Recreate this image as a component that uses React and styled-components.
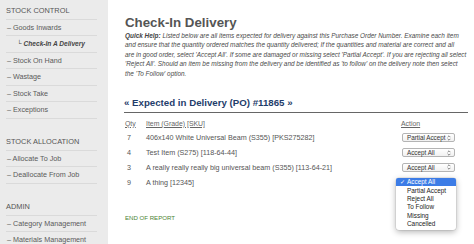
import React from "react";
import styled, { createGlobalStyle } from "styled-components";

const GlobalStyle = createGlobalStyle`
  html, body {
    margin: 0;
    padding: 0;
    background: #fff;
  }
  body {
    width: 474px;
    height: 244px;
    overflow: hidden;
    font-family: "Liberation Sans", Arial, sans-serif;
  }
`;

const nav = [
  {
    title: "STOCK CONTROL",
    items: [
      { label: "Goods Inwards" },
      { label: "Check-In A Delivery", sub: true },
      { label: "Stock On Hand" },
      { label: "Wastage" },
      { label: "Stock Take" },
      { label: "Exceptions" },
    ],
  },
  {
    title: "STOCK ALLOCATION",
    items: [{ label: "Allocate To Job" }, { label: "Deallocate From Job" }],
  },
  {
    title: "ADMIN",
    items: [{ label: "Category Management" }, { label: "Materials Management" }],
  },
];

const rows = [
  { qty: 7, item: "406x140 White Universal Beam (S355) [PKS275282]", action: "Partial Accept" },
  { qty: 4, item: "Test Item (S275) [118-64-44]", action: "Accept All" },
  { qty: 3, item: "A really really really big universal beam (S355) [113-64-21]", action: "Accept All" },
  { qty: 9, item: "A thing [12345]", action: "Accept All", open: true },
];

const options = ["Accept All", "Partial Accept", "Reject All", "To Follow", "Missing", "Cancelled"];

const Page = styled.div`
  display: flex;
  height: 244px;
`;

const Sidebar = styled.nav`
  width: 108px;
  flex-shrink: 0;
  background: #ebebeb;
  padding-top: 3px;
  box-sizing: border-box;
`;

const Group = styled.div`
  & + & {
    margin-top: 15.5px;
  }
`;

const NavRow = styled.div`
  height: 16.5px;
  box-sizing: border-box;
  margin: 0 11px 0 6px;
  border-bottom: 1px solid #dadada;
  display: flex;
  align-items: center;
  font-size: ${(p) => (p.$sub ? "6.6px" : "7.2px")};
  color: ${(p) => (p.$sub ? "#444" : "#5a5a5a")};
  font-style: ${(p) => (p.$sub ? "italic" : "normal")};
  font-weight: ${(p) => (p.$sub ? "bold" : "normal")};
  padding-left: ${(p) => (p.$sub ? "11px" : "1px")};
  white-space: nowrap;
`;

const NavHeading = styled(NavRow)`
  font-size: 7.4px;
  color: #555;
  padding-left: 0;
`;

const Main = styled.main`
  flex: 1;
  min-width: 0;
  padding: 16.7px 6px 0 17px;
  color: #555;
`;

const Title = styled.h1`
  margin: 0;
  font-size: 13.3px;
  line-height: 12px;
  font-weight: bold;
  color: #555;
`;

const Help = styled.p`
  margin: 2px 0 0;
  font-size: 6.42px;
  line-height: 9.5px;
  font-style: italic;
  color: #4a4a4a;
  white-space: nowrap;

  b {
    color: #444;
  }
`;

const SectionHeader = styled.h2`
  margin: 19px 0 0 -1px;
  padding-bottom: 4px;
  border-bottom: 1px solid #666;
  font-size: 9.7px;
  line-height: 11px;
  font-weight: bold;
  color: #1f3d6b;
`;

const Table = styled.div`
  margin-top: 2.5px;
  display: grid;
  grid-template-columns: 21px 255px 1fr;
  grid-auto-rows: 14.8px;
  align-items: center;
  font-size: 7.2px;
  color: #555;
`;

const HeadCell = styled.span`
  text-decoration: underline;
  color: #666;
  font-size: 6.9px;
`;

const Cell = styled.span`
  position: relative;
  white-space: nowrap;
  padding-left: ${(p) => p.$pad || 0};
`;

const Select = styled.div`
  width: 53px;
  height: 9px;
  box-sizing: border-box;
  margin-left: 1px;
  border: 1px solid #b4b4b4;
  border-radius: 2px;
  background: linear-gradient(#fff, #f1f1f1);
  display: flex;
  align-items: center;
  justify-content: space-between;
  padding: 0 3px 0 4px;
  font-size: 6.3px;
  color: #333;
`;

const Menu = styled.div`
  position: absolute;
  left: -5px;
  top: 0px;
  width: 60px;
  padding: 0 0 2px;
  background: #fff;
  border-radius: 3px;
  box-shadow: 0 2px 6px rgba(0, 0, 0, 0.3), 0 0 0 0.5px rgba(0, 0, 0, 0.12);
  z-index: 5;
`;

const MenuItem = styled.div`
  height: 8.3px;
  display: flex;
  align-items: center;
  padding-left: 11px;
  position: relative;
  font-size: 6.4px;
  color: ${(p) => (p.$active ? "#fff" : "#222")};
  background: ${(p) => (p.$active ? "#3c7ce6" : "transparent")};
  border-radius: ${(p) => (p.$active ? "2px 2px 0 0" : "0")};
`;

const Check = styled.span`
  position: absolute;
  left: 4px;
  font-size: 6px;
`;

const EndOfReport = styled.div`
  margin-top: 23px;
  font-size: 6.1px;
  line-height: 9px;
  color: #4b8534;
`;

const Arrows = () => (
  <svg width="4" height="6" viewBox="0 0 4 6">
    <path d="M0.6 2.2 L2 0.8 L3.4 2.2 M0.6 3.8 L2 5.2 L3.4 3.8" fill="none" stroke="#555" strokeWidth="0.7" />
  </svg>
);

export default function App() {
  return (
    <>
      <GlobalStyle />
      <Page>
        <Sidebar>
          {nav.map((g) => (
            <Group key={g.title}>
              <NavHeading>{g.title}</NavHeading>
              {g.items.map((it) => (
                <NavRow key={it.label} $sub={it.sub}>
                  {it.sub ? "\u2514 " : "\u2013 "}
                  {it.label}
                </NavRow>
              ))}
            </Group>
          ))}
        </Sidebar>
        <Main>
          <Title>Check-In Delivery</Title>
          <Help>
            <b>Quick Help:</b> Listed below are all items expected for delivery against this Purchase Order Number. Examine each item
            <br />
            and ensure that the quantity ordered matches the quantity delivered; If the quantities and material are correct and all
            <br />
            are in good order, select 'Accept All'. If some are damaged or missing select 'Partial Accept'. If you are rejecting all select
            <br />
            'Reject All'. Should an item be missing from the delivery and be identified as 'to follow' on the delivery note then select
            <br />
            the 'To Follow' option.
          </Help>
          <SectionHeader>« Expected in Delivery (PO) #11865 »</SectionHeader>
          <Table>
            <HeadCell>Qty</HeadCell>
            <HeadCell>Item (Grade) [SKU]</HeadCell>
            <HeadCell>Action</HeadCell>
            {rows.map((r) => (
              <React.Fragment key={r.item}>
                <Cell $pad="2px">{r.qty}</Cell>
                <Cell>{r.item}</Cell>
                <Cell>
                  <Select>
                    <span>{r.action}</span>
                    <Arrows />
                  </Select>
                  {r.open && (
                    <Menu>
                      {options.map((o) => (
                        <MenuItem key={o} $active={o === r.action}>
                          {o === r.action && <Check>✓</Check>}
                          {o}
                        </MenuItem>
                      ))}
                    </Menu>
                  )}
                </Cell>
              </React.Fragment>
            ))}
          </Table>
          <EndOfReport>END OF REPORT</EndOfReport>
        </Main>
      </Page>
    </>
  );
}
